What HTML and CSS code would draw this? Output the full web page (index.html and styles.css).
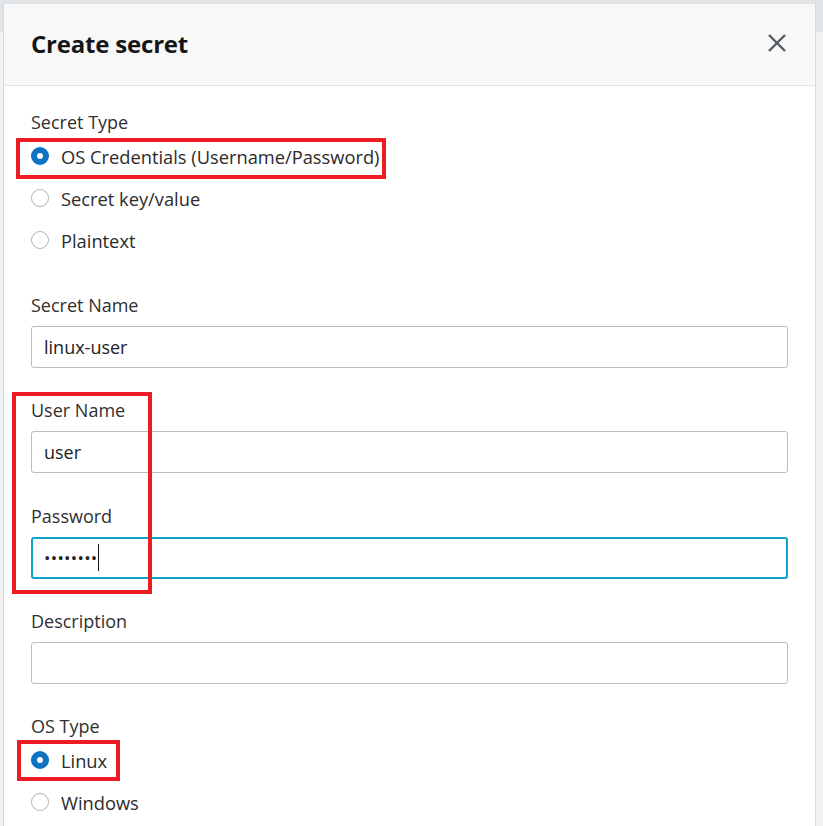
FILE: index.html
```html
<!DOCTYPE html>
<html lang="en">
<head>
<meta charset="utf-8">
<title>Create secret</title>
<link rel="stylesheet" href="styles.css">
</head>
<body>
<div class="modal">
  <div class="modal-header">
    <h1 class="modal-title">Create secret</h1>
    <button class="close-btn" aria-label="Close">
      <svg width="20" height="20" viewBox="0 0 20 20"><path d="M2 2 L18 18 M18 2 L2 18" stroke="#545b62" stroke-width="2.4" fill="none"/></svg>
    </button>
  </div>
  <div class="modal-body">
    <div class="group">
      <div class="label">Secret Type</div>
      <div class="radio-row"><span class="radio checked"></span><span class="radio-text">OS Credentials (Username/Password)</span></div>
      <div class="radio-row"><span class="radio"></span><span class="radio-text">Secret key/value</span></div>
      <div class="radio-row"><span class="radio"></span><span class="radio-text">Plaintext</span></div>
    </div>
    <div class="field">
      <div class="label">Secret Name</div>
      <div class="input">linux-user</div>
    </div>
    <div class="field">
      <div class="label">User Name</div>
      <div class="input">user</div>
    </div>
    <div class="field">
      <div class="label">Password</div>
      <div class="input focused"><span class="dots">••••••••</span><span class="caret"></span></div>
    </div>
    <div class="field">
      <div class="label">Description</div>
      <div class="input"></div>
    </div>
    <div class="group">
      <div class="label">OS Type</div>
      <div class="radio-row"><span class="radio checked"></span><span class="radio-text">Linux</span></div>
      <div class="radio-row"><span class="radio"></span><span class="radio-text">Windows</span></div>
    </div>
  </div>
  <div class="mark mark-1"></div>
  <div class="mark mark-2"></div>
  <div class="mark mark-3"></div>
</div>
</body>
</html>
```
FILE: styles.css
```css
html, body {
  margin: 0;
  padding: 0;
}
body {
  width: 823px;
  height: 826px;
  overflow: hidden;
  background: linear-gradient(#e1e4e6 0, #e1e4e6 32px, #f1f2f2 32px);
  font-family: "Open Sans", "Noto Sans", sans-serif;
  color: #2b2b2b;
}
.modal {
  position: relative;
  margin: 4px 7px 0 3px;
  height: 822px;
  background: #ffffff;
  border-left: 1px solid #d6d9db;
  border-right: 1px solid #d6d9db;
  box-sizing: border-box;
}
.modal-header {
  height: 82px;
  box-sizing: border-box;
  background: #f8f8f8;
  border-bottom: 1px solid #e4e6e7;
  display: flex;
  align-items: center;
  justify-content: space-between;
  padding: 0 28px 3px 27px;
}
.modal-title {
  margin: 0;
  font-size: 24px;
  font-weight: 700;
  color: #151515;
  letter-spacing: -0.2px;
}
.close-btn {
  border: 0;
  background: transparent;
  padding: 0;
  width: 20px;
  height: 20px;
  display: flex;
}
.modal-body {
  padding: 24px 27px 0 27px;
}
.label {
  font-size: 18px;
  line-height: 24px;
  color: #303030;
}
.group .label {
  margin-bottom: 1px;
}
.radio-row {
  height: 42px;
  display: flex;
  align-items: center;
  font-size: 18.3px;
  color: #2b2b2b;
}
.radio {
  width: 18px;
  height: 18px;
  box-sizing: border-box;
  border-radius: 50%;
  border: 1.5px solid #a9b6ba;
  background: #fff;
  margin-left: 0;
  margin-right: 12px;
  flex: none;
}
.radio.checked {
  border: 6px solid #0a73c3;
  background: #fff;
}
.group + .field {
  margin-top: 32px;
}
.field {
  margin-bottom: 30.3px;
}
.field .label {
  margin-bottom: 9px;
}
.input {
  height: 42px;
  box-sizing: border-box;
  border: 1px solid #b5c0c3;
  border-radius: 3px;
  padding: 0 12px;
  display: flex;
  align-items: center;
  font-size: 18px;
  color: #222;
}
.input.focused {
  border: 2px solid #0aa3cc;
  padding-left: 11px;
}
.dots {
  font-size: 17px;
  letter-spacing: 0.3px;
  color: #222;
}
.caret {
  display: inline-block;
  width: 1px;
  height: 27px;
  background: #111;
  margin-left: 0;
}
.mark {
  position: absolute;
  border: 4px solid #ed1c24;
  box-sizing: border-box;
}
.mark-1 {
  left: 12px;
  top: 134px;
  width: 370px;
  height: 41px;
}
.mark-2 {
  left: 8px;
  top: 388px;
  width: 140px;
  height: 202px;
}
.mark-3 {
  left: 13px;
  top: 736px;
  width: 103px;
  height: 41px;
}
```
